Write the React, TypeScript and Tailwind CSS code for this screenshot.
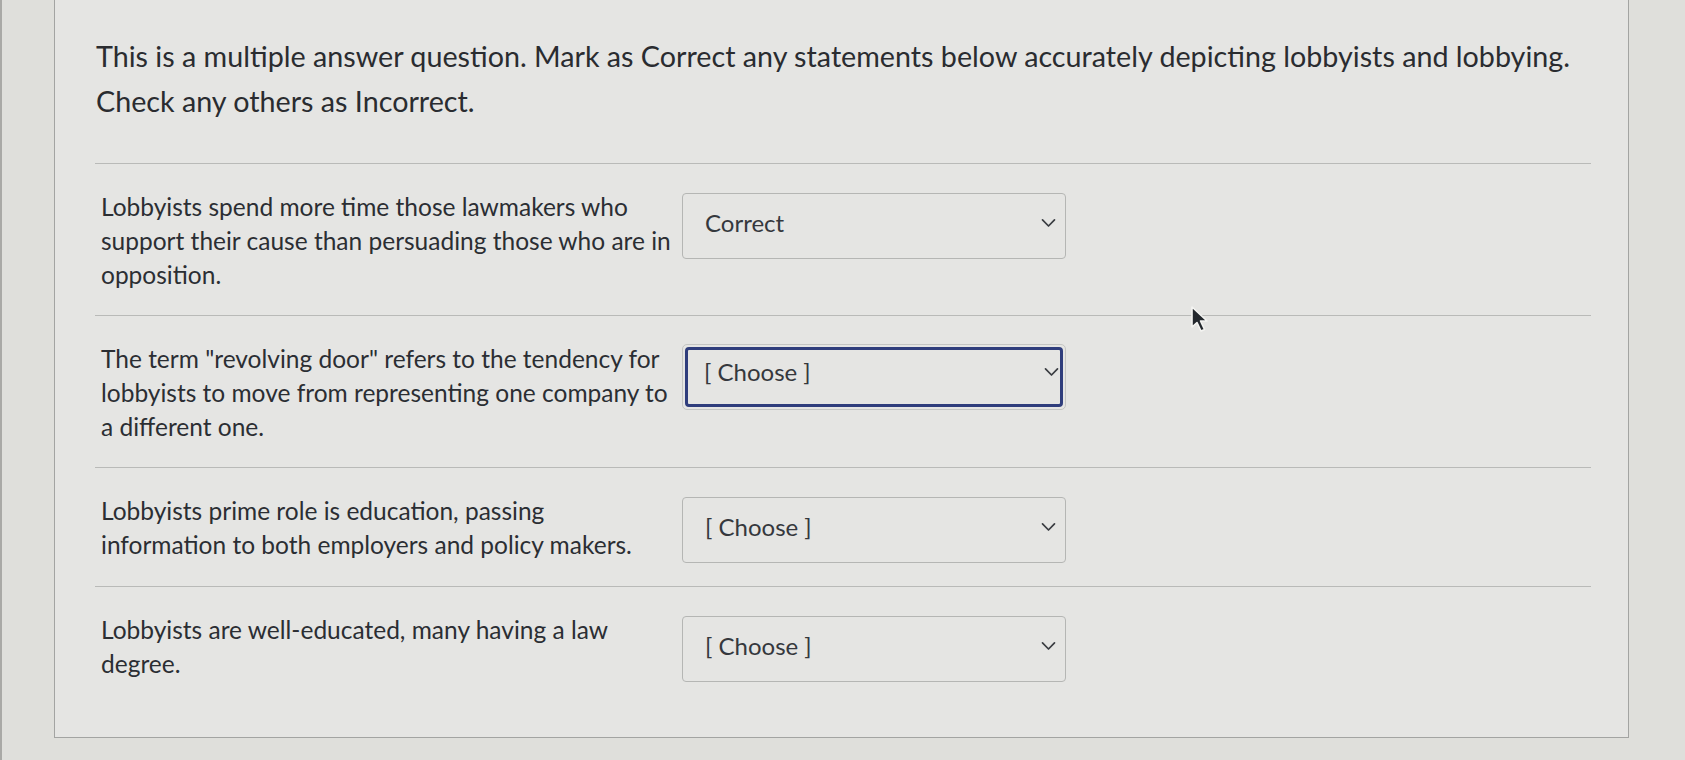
import React from "react";

const font = { fontFamily: "Lato, 'Open Sans', 'Liberation Sans', sans-serif" };

function Chevron() {
  return (
    <svg width="15" height="10" viewBox="0 0 15 10" fill="none" className="shrink-0">
      <path d="M1.5 1.8 L7.5 8 L13.5 1.8" stroke="#3a3d42" strokeWidth="1.7" strokeLinecap="round" strokeLinejoin="round" />
    </svg>
  );
}

function Select({ value, focused }: { value: string; focused?: boolean }) {
  if (focused) {
    return (
      <div className="mt-[2px] w-[384px] h-[66px] shrink-0 rounded-[5px] border border-[#c4c5c3] p-[2px]">
        <div className="h-full w-full rounded-[4px] border-[3px] border-[#2f3d7c] flex items-center justify-between pl-[16px] pr-[1px] pb-[10px]">
          <span className="text-[24px] text-[#35383d]">{value}</span>
          <Chevron />
        </div>
      </div>
    );
  }
  return (
    <div className="mt-[3px] w-[384px] h-[66px] shrink-0 rounded-[4px] border border-[#b5b6b4] flex items-center justify-between pl-[22px] pr-[9px] pb-[6px]">
      <span className="text-[24px] text-[#35383d]">{value}</span>
      <Chevron />
    </div>
  );
}

function Row({ lines, value, focused, last }: { lines: string[]; value: string; focused?: boolean; last?: boolean }) {
  return (
    <div className={"flex items-start pt-[26px] pb-[23px] pl-[6px] " + (last ? "" : "border-b border-[#b9bab8]")}>
      <div className="w-[581px] shrink-0 text-[24.5px] leading-[34px] text-[#2b2e33] whitespace-nowrap">
        {lines.map((l, i) => (
          <div key={i}>{l}</div>
        ))}
      </div>
      <Select value={value} focused={focused} />
    </div>
  );
}

export default function App() {
  return (
    <div className="relative w-[1685px] h-[760px] overflow-hidden bg-[#dfdfdb] flex" style={font}>
      <div className="w-[2px] h-full bg-[#a9a9a6] shrink-0" />
      <div className="ml-[52px] w-[1575px] h-[738px] shrink-0 border-l border-r border-b border-[#a3a4a2] bg-[#e5e5e3] pl-[40px] pr-[37px]">
        <div className="pt-[34px] pl-[1px] text-[28.7px] leading-[45px] text-[#2a2c30] whitespace-nowrap">
          <div>This is a multiple answer question. Mark as Correct any statements below accurately depicting lobbyists and lobbying.</div>
          <div>Check any others as Incorrect.</div>
        </div>
        <div className="mt-[39px] border-t border-[#b9bab8]">
          <Row
            lines={[
              "Lobbyists spend more time those lawmakers who",
              "support their cause than persuading those who are in",
              "opposition.",
            ]}
            value="Correct"
          />
          <Row
            lines={[
              "The term \"revolving door\" refers to the tendency for",
              "lobbyists to move from representing one company to",
              "a different one.",
            ]}
            value="[ Choose ]"
            focused
          />
          <Row
            lines={[
              "Lobbyists prime role is education, passing",
              "information to both employers and policy makers.",
            ]}
            value="[ Choose ]"
          />
          <Row
            lines={["Lobbyists are well-educated, many having a law", "degree."]}
            value="[ Choose ]"
            last
          />
        </div>
      </div>
      <svg className="absolute left-[1190px] top-[305px]" width="22" height="30" viewBox="0 0 22 30">
        <path d="M2 2 L2 22 L7 17.5 L11 26 L14.5 24.5 L10.5 16 L17 16 Z" fill="#23282d" stroke="#f4f4f2" strokeWidth="1.6" strokeLinejoin="round" />
      </svg>
    </div>
  );
}
